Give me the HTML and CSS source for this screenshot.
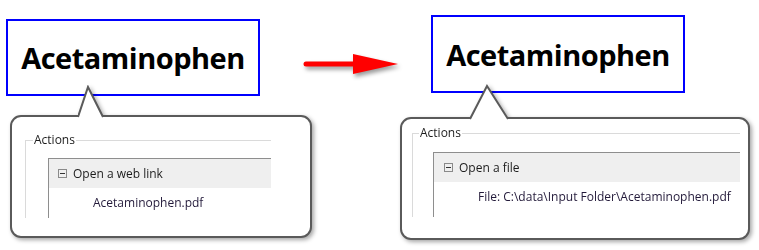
FILE: index.html
```html
<!DOCTYPE html>
<html>
<head>
<meta charset="utf-8">
<link rel="stylesheet" href="styles.css">
</head>
<body>
<div class="stage">
  <div class="panel panel-left">
    <div class="title-box"><span class="title">Acetaminophen</span></div>
    <div class="callout">
      <svg class="pointer" width="40" height="34" viewBox="0 0 40 34">
        <polygon points="0,32 10,2 25,32" fill="#fff"/>
        <polyline points="0,32 10,2 25,32" fill="none" stroke="#5a5a5a" stroke-width="2" stroke-linejoin="miter"/>
      </svg>
      <div class="group-clip">
        <fieldset class="group">
          <legend>Actions</legend>
          <div class="list">
            <div class="row row-head"><span class="toggle"></span><span>Open a web link</span></div>
            <div class="row row-detail">Acetaminophen.pdf</div>
          </div>
        </fieldset>
      </div>
    </div>
  </div>
  <svg class="arrow" width="96" height="26" viewBox="0 0 96 26">
    <line x1="3" y1="12" x2="52" y2="12" stroke="#ff0000" stroke-width="5" stroke-linecap="round"/>
    <polygon points="50,2 95,12 50,22" fill="#ff0000"/>
  </svg>
  <div class="panel panel-right">
    <div class="title-box"><span class="title">Acetaminophen</span></div>
    <div class="callout">
      <svg class="pointer" width="44" height="37" viewBox="0 0 44 37">
        <polygon points="0,35 17,2 38,35" fill="#fff"/>
        <polyline points="0,35 17,2 38,35" fill="none" stroke="#5a5a5a" stroke-width="2" stroke-linejoin="miter"/>
      </svg>
      <div class="group-clip">
        <fieldset class="group">
          <legend>Actions</legend>
          <div class="list">
            <div class="row row-head"><span class="toggle"></span><span>Open a file</span></div>
            <div class="row row-detail">File: C:\data\Input Folder\Acetaminophen.pdf</div>
          </div>
        </fieldset>
      </div>
    </div>
  </div>
</div>
</body>
</html>
```
FILE: styles.css
```css
html, body {
  margin: 0;
  padding: 0;
  background: #ffffff;
}
body {
  width: 759px;
  height: 250px;
  overflow: hidden;
  font-family: "Open Sans", "Noto Sans", sans-serif;
  color: #1c1c1c;
}
.stage {
  display: flex;
  align-items: flex-start;
}
.panel {
  display: flex;
  flex-direction: column;
  flex: none;
}
.title-box {
  box-sizing: border-box;
  width: 254px;
  border: 2px solid #0000ff;
  display: flex;
  align-items: center;
  justify-content: center;
}
.title {
  font-size: 29px;
  font-weight: 700;
  color: #000;
  letter-spacing: -0.5px;
}
.callout {
  position: relative;
  box-sizing: border-box;
  border: 2px solid #5a5a5a;
  border-radius: 11px;
  background: #fff;
  filter: drop-shadow(2px 2px 2px rgba(0, 0, 0, 0.35));
}
.pointer {
  position: absolute;
}
.group-clip {
  overflow: hidden;
}
.group {
  margin: 0;
  border: 1px solid #dadada;
  border-right: none;
  border-bottom: none;
  width: 600px;
  height: 200px;
  padding: 0;
}
.group legend {
  font-size: 12px;
  line-height: 16px;
  padding: 0 1px;
}
.list {
  border-left: 1px solid #8e8e8e;
  border-top: 1px solid #8e8e8e;
  font-size: 12px;
  height: 120px;
}
.row {
  display: flex;
  align-items: center;
}
.row-head {
  height: 29px;
  background: #efefef;
}
.toggle {
  box-sizing: border-box;
  width: 9px;
  height: 9px;
  border: 1px solid #8a8a8a;
  position: relative;
  margin-right: 6px;
  flex: none;
}
.toggle::after {
  content: "";
  position: absolute;
  left: 1px;
  right: 1px;
  top: 3px;
  height: 1px;
  background: #333;
}
.row-detail {
  height: 28px;
  padding-left: 44px;
  color: #231a3a;
}

/* left panel */
.panel-left {
  margin-left: 6px;
  margin-top: 19px;
  width: 306px;
}
.panel-left .title-box {
  height: 77px;
}
.panel-left .callout {
  margin-left: 4px;
  margin-top: 19px;
  width: 302px;
  height: 123px;
}
.panel-left .pointer {
  left: 66px;
  top: -32px;
}
.panel-left .group-clip {
  margin-left: 13px;
  margin-top: 15px;
  width: 246px;
  height: 86px;
}
.panel-left .group legend {
  margin-left: 7px;
}
.panel-left .list {
  margin-left: 22px;
  margin-top: 10px;
}
.panel-left .row-head {
  padding-left: 9px;
}

/* arrow */
.arrow {
  flex: none;
  margin-left: -9px;
  margin-top: 52px;
  filter: drop-shadow(2px 3px 2px rgba(0, 0, 0, 0.4));
}

/* right panel */
.panel-right {
  margin-left: 1px;
  margin-top: 15px;
  width: 350px;
}
.panel-right .title-box {
  margin-left: 31px;
  height: 78px;
}
.panel-right .callout {
  margin-top: 24px;
  width: 350px;
  height: 123px;
}
.panel-right .pointer {
  left: 68px;
  top: -35px;
}
.panel-right .group-clip {
  margin-left: 10px;
  margin-top: 6px;
  width: 328px;
  height: 92px;
}
.panel-right .group legend {
  margin-left: 6px;
}
.panel-right .list {
  margin-left: 20px;
  margin-top: 11px;
}
.panel-right .row-head {
  padding-left: 10px;
}
```
